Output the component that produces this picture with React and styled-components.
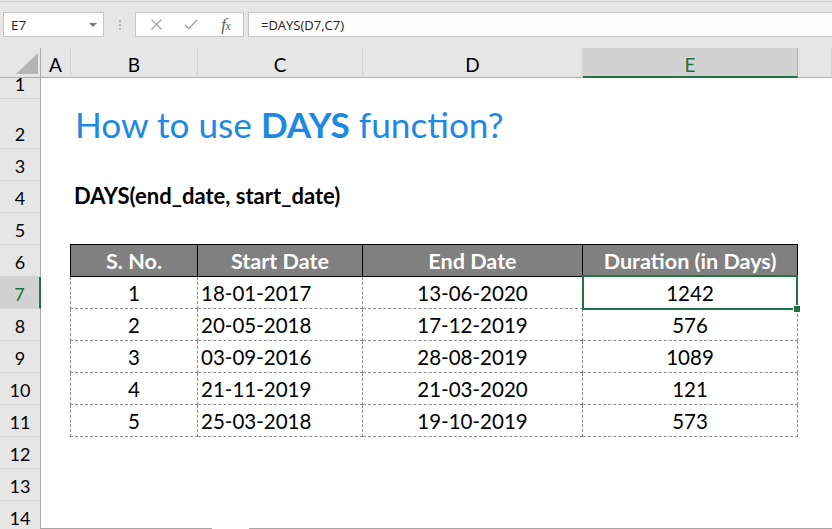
import React from "react";
import styled, { createGlobalStyle } from "styled-components";

const FONT = `Lato, "Liberation Sans", sans-serif`;
const UI_FONT = `"Open Sans", "Noto Sans", sans-serif`;
const GREEN = "#217346";

const GlobalStyle = createGlobalStyle`
  html, body { margin: 0; padding: 0; background: #fff; overflow: hidden; }
  * { box-sizing: border-box; }
`;

const Window = styled.div`
  width: 832px;
  height: 529px;
  display: flex;
  flex-direction: column;
  overflow: hidden;
  background: #fff;
  font-family: ${FONT};
`;

/* ---------- formula bar ---------- */
const FormulaBar = styled.div`
  height: 48px;
  flex: none;
  display: flex;
  align-items: flex-start;
  padding: 12px 0 0 3px;
  background: linear-gradient(#e6e6e6 0 1px, #d0d0d0 1px 2px, #e6e6e6 2px);
`;

const NameBox = styled.div`
  width: 101px;
  height: 25px;
  background: #fff;
  border: 1px solid #c6c6c6;
  display: flex;
  align-items: center;
  justify-content: space-between;
  padding: 0 6px 0 7px;
  font: 13.5px ${UI_FONT};
  color: #222;
`;

const Caret = styled.span`
  width: 0;
  height: 0;
  border-left: 4px solid transparent;
  border-right: 4px solid transparent;
  border-top: 4px solid #7a7a7a;
`;

const Grip = styled.div`
  margin: 8px 14px 0 15px;
  display: flex;
  flex-direction: column;
  gap: 2px;
`;

const GripDot = styled.span`
  width: 2px;
  height: 2px;
  background: #b5b5b5;
`;

const ButtonBox = styled.div`
  width: 109px;
  height: 25px;
  background: #fff;
  border: 1px solid #c6c6c6;
  display: flex;
  align-items: center;
  padding-left: 3px;
`;

const IconButton = styled.span`
  width: 35px;
  height: 23px;
  display: flex;
  align-items: center;
  justify-content: center;
`;

const Fx = styled.span`
  font-family: "Liberation Serif", "DejaVu Serif", serif;
  font-style: italic;
  font-size: 17px;
  color: #5e5e5e;
  letter-spacing: -0.5px;
  small {
    font-size: 12px;
  }
`;

const FormulaInput = styled.div`
  flex: 1;
  margin-left: 4px;
  height: 25px;
  background: #fdfdfd;
  border: 1px solid #c6c6c6;
  border-right: none;
  display: flex;
  align-items: center;
  padding-left: 12px;
  font: 13px ${UI_FONT};
  color: #222;
`;

/* ---------- sheet grid ---------- */
const Sheet = styled.div`
  flex: 1;
  min-height: 0;
  overflow: hidden;
  display: grid;
  grid-template-columns: 41px 30px 127px 165px 220px 215px 1fr;
  grid-template-rows: 30px 21px 50px repeat(12, 32px);
`;

const Corner = styled.div`
  grid-row: 1;
  grid-column: 1;
  background: #e6e6e6;
  border-right: 1px solid #ababab;
  border-bottom: 1px solid #ababab;
  display: flex;
  align-items: flex-end;
  justify-content: flex-end;
  padding: 0 2px 3px 0;
`;

const CornerTriangle = styled.span`
  width: 0;
  height: 0;
  border-left: 22px solid transparent;
  border-bottom: 21px solid #b4b4b4;
`;

const ColHead = styled.div`
  grid-row: 1;
  background: ${(p) => (p.$active ? "#d2d2d2" : "#e6e6e6")};
  color: ${(p) => (p.$active ? GREEN : "#000")};
  border-right: 1px solid ${(p) => (p.$active ? "#ababab" : "#d4d4d4")};
  border-bottom: ${(p) => (p.$active ? `2px solid ${GREEN}` : "1px solid #ababab")};
  display: flex;
  align-items: flex-end;
  justify-content: center;
  padding-bottom: ${(p) => (p.$active ? 2 : 3)}px;
  font-size: 19px;
  line-height: 1;
`;

const RowHead = styled.div`
  grid-column: 1;
  grid-row: ${(p) => p.$row};
  background: ${(p) => (p.$active ? "#d2d2d2" : "#e6e6e6")};
  color: ${(p) => (p.$active ? GREEN : "#000")};
  border-bottom: 1px solid #d4d4d4;
  border-right: ${(p) => (p.$active ? `2px solid ${GREEN}` : "1px solid #ababab")};
  display: flex;
  align-items: flex-end;
  justify-content: center;
  padding-bottom: 5px;
  font-size: 18px;
  line-height: 1;
`;

const Title = styled.div`
  grid-column: 3 / -1;
  grid-row: 3;
  display: flex;
  align-items: flex-end;
  padding: 0 0 7px 4px;
  font-size: 35.2px;
  line-height: 1;
  color: #1e88e5;
  white-space: pre;
  b {
    font-weight: 700;
  }
`;

const Syntax = styled.div`
  grid-column: 3 / -1;
  grid-row: 5;
  display: flex;
  align-items: flex-end;
  padding: 0 0 6px 3px;
  font-size: 22px;
  font-weight: 700;
  line-height: 1;
  color: #000;
  white-space: pre;
`;

/* ---------- data table ---------- */
const Table = styled.div`
  grid-column: 3 / 7;
  grid-row: 7 / 13;
  margin: -1px 0 0 -1px;
  display: grid;
  grid-template-columns: 128px 165px 220px 215px;
  grid-template-rows: 33px repeat(5, 32px);
`;

const HeadCell = styled.div`
  background: #808080;
  color: #fff;
  font-weight: 700;
  font-size: 21.6px;
  line-height: 1;
  border-top: 1px solid #000;
  border-right: 1px solid #000;
  border-bottom: 1px solid #000;
  border-left: ${(p) => (p.$first ? "1px solid #000" : "none")};
  display: flex;
  align-items: flex-end;
  justify-content: center;
  padding-bottom: 3px;
  white-space: nowrap;
`;

const DataCell = styled.div`
  position: relative;
  font-size: 20.5px;
  line-height: 1;
  color: #000;
  border-right: 1px dashed #8c8c8c;
  border-bottom: 1px dashed #8c8c8c;
  border-left: ${(p) => (p.$first ? "1px dashed #8c8c8c" : "none")};
  display: flex;
  align-items: flex-end;
  justify-content: ${(p) => (p.$align === "left" ? "flex-start" : "center")};
  padding: 0 3px 5px 3px;
`;

const Selection = styled.span`
  position: absolute;
  left: -1px;
  top: -2px;
  right: -1px;
  bottom: -2px;
  border: 2px solid ${GREEN};
  z-index: 1;
  pointer-events: none;
`;

const FillHandle = styled.span`
  position: absolute;
  right: -4px;
  bottom: -4px;
  width: 6px;
  height: 6px;
  background: ${GREEN};
  box-shadow: 0 0 0 1px #fff;
`;

/* ---------- bottom edge ---------- */
const BottomBar = styled.div`
  height: 1px;
  flex: none;
  display: flex;
`;

const BarPiece = styled.span`
  flex: ${(p) => (p.$grow ? 1 : "none")};
  width: ${(p) => p.$w || 0}px;
  background: ${(p) => p.$color};
`;

const columns = ["A", "B", "C", "D", "E"];
const rows = [
  [1, "18-01-2017", "13-06-2020", 1242],
  [2, "20-05-2018", "17-12-2019", 576],
  [3, "03-09-2016", "28-08-2019", 1089],
  [4, "21-11-2019", "21-03-2020", 121],
  [5, "25-03-2018", "19-10-2019", 573],
];

export default function App() {
  return (
    <Window>
      <GlobalStyle />
      <FormulaBar>
        <NameBox>
          <span>E7</span>
          <Caret />
        </NameBox>
        <Grip>
          <GripDot />
          <GripDot />
          <GripDot />
        </Grip>
        <ButtonBox>
          <IconButton>
            <svg width="11" height="11" viewBox="0 0 11 11">
              <path d="M0.5 0.5 L10.5 10.5 M10.5 0.5 L0.5 10.5" stroke="#a6a6a6" strokeWidth="1.3" fill="none" />
            </svg>
          </IconButton>
          <IconButton>
            <svg width="14" height="11" viewBox="0 0 14 11">
              <path d="M0.8 5.8 L4.8 9.8 L13.2 0.8" stroke="#a6a6a6" strokeWidth="1.4" fill="none" />
            </svg>
          </IconButton>
          <IconButton>
            <Fx>
              f<small>x</small>
            </Fx>
          </IconButton>
        </ButtonBox>
        <FormulaInput>=DAYS(D7,C7)</FormulaInput>
      </FormulaBar>

      <Sheet>
        <Corner>
          <CornerTriangle />
        </Corner>
        {columns.map((c) => (
          <ColHead key={c} $active={c === "E"}>
            {c}
          </ColHead>
        ))}
        <ColHead />

        {Array.from({ length: 14 }, (_, i) => (
          <RowHead key={i} $row={i + 2} $active={i + 1 === 7}>
            {i + 1}
          </RowHead>
        ))}

        <Title>
          How to use <b>DAYS</b> function?
        </Title>
        <Syntax>DAYS(end_date, start_date)</Syntax>

        <Table>
          <HeadCell $first>S. No.</HeadCell>
          <HeadCell>Start Date</HeadCell>
          <HeadCell>End Date</HeadCell>
          <HeadCell>Duration (in Days)</HeadCell>
          {rows.map(([n, start, end, days], r) => (
            <React.Fragment key={n}>
              <DataCell $first>{n}</DataCell>
              <DataCell $align="left">{start}</DataCell>
              <DataCell>{end}</DataCell>
              <DataCell>
                {days}
                {r === 0 && (
                  <Selection>
                    <FillHandle />
                  </Selection>
                )}
              </DataCell>
            </React.Fragment>
          ))}
        </Table>
      </Sheet>

      <BottomBar>
        <BarPiece $w={40} $color="#e6e6e6" />
        <BarPiece $w={172} $color="#a6a6a6" />
        <BarPiece $w={37} $color="#fff" />
        <BarPiece $grow $color="#a6a6a6" />
      </BottomBar>
    </Window>
  );
}
